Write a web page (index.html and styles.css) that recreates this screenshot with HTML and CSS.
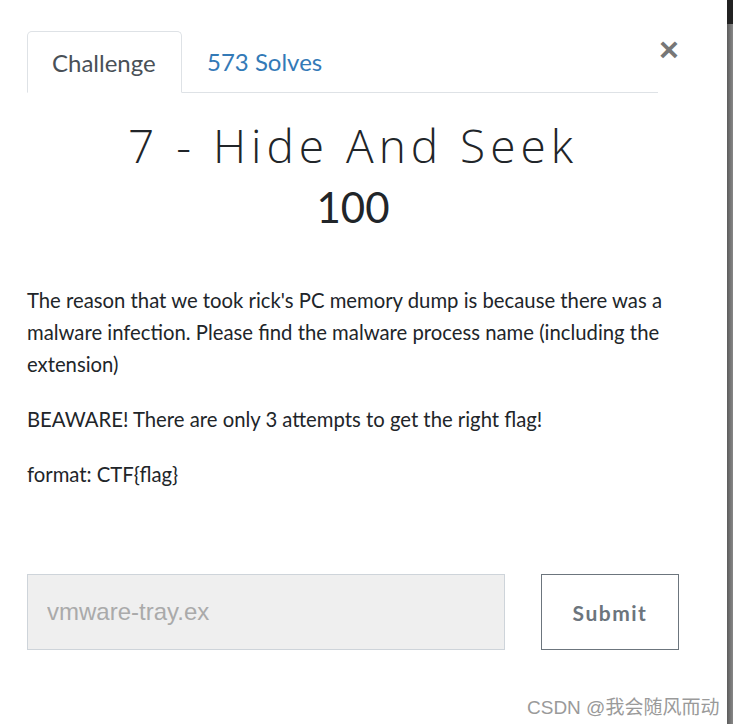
FILE: index.html
```html
<!DOCTYPE html>
<html>
<head>
<meta charset="utf-8">
<link rel="stylesheet" href="styles.css">
</head>
<body>
<div class="page">
  <div class="modal">
    <div class="header">
      <ul class="tabs">
        <li class="tab active">Challenge</li>
        <li class="tab link">573 Solves</li>
      </ul>
      <button class="close">&times;</button>
    </div>
    <h2 class="title">7 - Hide And Seek</h2>
    <h3 class="points">100</h3>
    <div class="desc">
      <p>The reason that we took rick's PC memory dump is because there was a malware infection. Please find the malware process name (including the extension)</p>
      <p>BEAWARE! There are only 3 attempts to get the right flag!</p>
      <p>format: CTF{flag}</p>
    </div>
    <div class="form">
      <input class="answer" type="text" placeholder="vmware-tray.ex">
      <button class="submit">Submit</button>
    </div>
  </div>
  <div class="scrollbar"><div class="thumb"></div></div>
  <div class="watermark">CSDN @我会随风而动</div>
</div>
</body>
</html>
```
FILE: styles.css
```css
html, body { margin: 0; padding: 0; background: #fff; }
body { font-family: Lato, "Noto Sans", sans-serif; color: #212529; }
.page { position: relative; width: 733px; height: 724px; overflow: hidden; display: flex; }
.modal { width: 700px; padding: 31px 0 0 27px; box-sizing: border-box; }
.header { display: flex; align-items: flex-start; }
.tabs { list-style: none; margin: 0; padding: 0; display: flex; width: 631px; border-bottom: 1px solid #dee2e6; height: 61px; }
.tab { font-size: 24px; line-height: 62px; padding: 0 25px; box-sizing: border-box; }
.tab.active { color: #495057; border: 1px solid #dee2e6; border-bottom: 1px solid #fff; border-radius: 5px 5px 0 0; height: 62px; width: 155px; padding: 0 0 0 24px; line-height: 61px; }
.tab.link { color: #337ab7; padding-left: 25px; }
.close { border: 0; background: none; padding: 0; margin: 3px 0 0 1px; width: 20px; height: 30px; font-size: 34px; line-height: 30px; font-weight: 700; color: #777; font-family: "Liberation Sans", sans-serif; }
.title { margin: 26px 0 0; width: 652px; text-align: center; font-family: "Open Sans", sans-serif; font-weight: 300; font-size: 46px; line-height: 52px; letter-spacing: 5px; color: #212529; }
.points { margin: 10px 0 0; width: 652px; text-align: center; font-weight: 400; font-size: 42px; line-height: 52px; color: #212529; }
.desc { margin-top: 51px; width: 670px; font-size: 20.3px; line-height: 32px; }
.desc p { margin: 0 0 23px; }
.form { margin-top: 84px; display: flex; gap: 36px; }
.answer { width: 478px; height: 76px; box-sizing: border-box; background: #efefef; border: 1px solid #ced4da; padding: 0 19px; font-family: "Liberation Sans", Arial, sans-serif; font-size: 24px; color: #333; outline: none; }
.answer::placeholder { color: #aaa; }
.submit { width: 138px; height: 76px; box-sizing: border-box; background: #fff; border: 1px solid #6c757d; color: #6c757d; font-family: Lato, sans-serif; font-weight: 700; font-size: 21px; letter-spacing: 1.5px; }
.scrollbar { position: absolute; right: 0; top: 0; width: 6px; height: 724px; background: linear-gradient(to right, #5c5c5c, #888); }
.thumb { width: 6px; height: 24px; background: #222; }
.watermark { position: absolute; left: 527px; top: 692px; font-family: "Liberation Sans", "Noto Sans CJK SC", sans-serif; font-size: 19px; color: #9a9a9a; }
```
